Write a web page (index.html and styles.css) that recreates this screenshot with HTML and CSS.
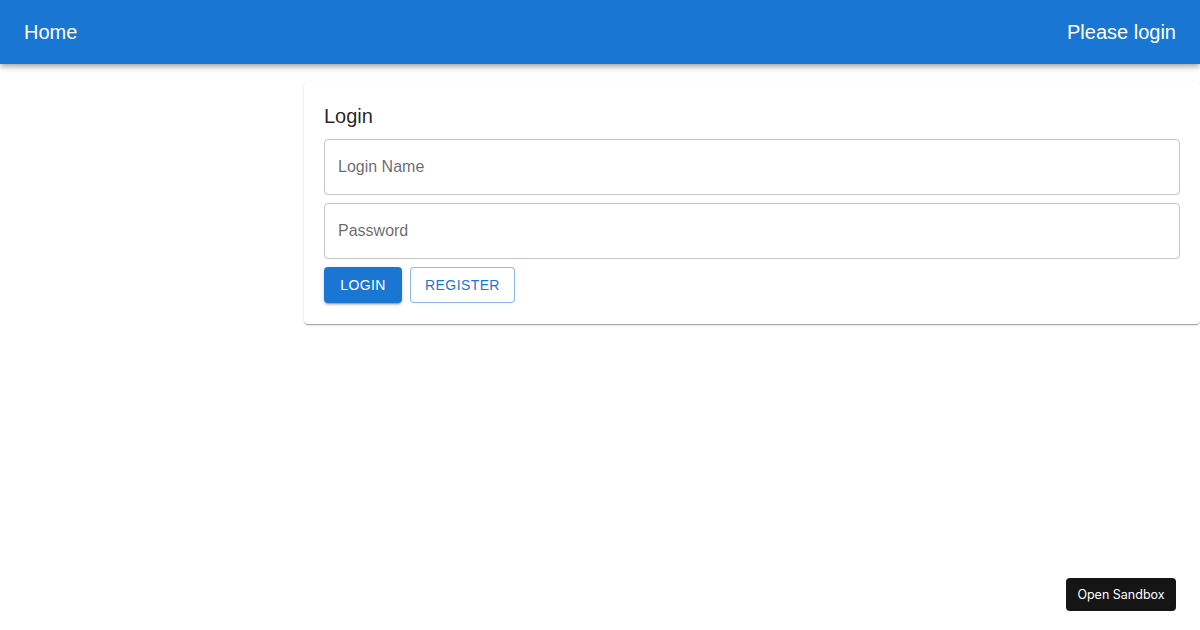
FILE: index.html
```html
<!DOCTYPE html>
<html lang="en">
<head>
<meta charset="utf-8">
<title>Login</title>
<link rel="stylesheet" href="styles.css">
</head>
<body>
<header class="appbar">
  <span class="appbar-title">Home</span>
  <span class="appbar-right">Please login</span>
</header>
<main class="layout">
  <aside class="side"></aside>
  <section class="card">
    <h2 class="card-title">Login</h2>
    <div class="field"><span class="field-label">Login Name</span></div>
    <div class="field"><span class="field-label">Password</span></div>
    <div class="actions">
      <button class="btn btn-contained">LOGIN</button>
      <button class="btn btn-outlined">REGISTER</button>
    </div>
  </section>
</main>
<button class="sandbox">Open Sandbox</button>
</body>
</html>
```
FILE: styles.css
```css
* { box-sizing: border-box; }
html, body { margin: 0; padding: 0; }
body {
  font-family: "Liberation Sans", Arial, Helvetica, sans-serif;
  background: #fff;
  color: rgba(0,0,0,0.87);
  width: 1200px;
  height: 630px;
  overflow: hidden;
  position: relative;
}
.appbar {
  height: 64px;
  background: #1976d2;
  color: #fff;
  display: flex;
  align-items: center;
  justify-content: space-between;
  padding: 0 24px;
  box-shadow: 0 2px 4px -1px rgba(0,0,0,0.2), 0 4px 5px 0 rgba(0,0,0,0.14), 0 1px 10px 0 rgba(0,0,0,0.12);
  position: relative;
  z-index: 2;
}
.appbar-title, .appbar-right {
  font-size: 20px;
  line-height: 1;
  font-weight: 400;
}
.layout {
  display: grid;
  grid-template-columns: 304px 1fr;
  padding-top: 18px;
}
.card {
  background: #fff;
  border-radius: 4px;
  box-shadow: 0 2px 1px -1px rgba(0,0,0,0.2), 0 1px 1px 0 rgba(0,0,0,0.14), 0 1px 3px 0 rgba(0,0,0,0.12);
  padding: 20px 20px 21px;
  display: flex;
  flex-direction: column;
}
.card-title {
  margin: 0 0 9px;
  font-size: 20px;
  font-weight: 400;
  line-height: 28px;
  color: rgba(0,0,0,0.87);
}
.field {
  height: 56px;
  border: 1px solid rgba(0,0,0,0.23);
  border-radius: 4px;
  display: flex;
  align-items: center;
  padding: 0 13px;
  margin-bottom: 8px;
}
.field-label {
  font-size: 16px;
  color: rgba(0,0,0,0.6);
}
.actions {
  display: flex;
  gap: 8px;
}
.btn {
  height: 36px;
  font-family: "Liberation Sans", Arial, Helvetica, sans-serif;
  font-size: 14px;
  font-weight: 400;
  letter-spacing: 0.4px;
  border-radius: 4px;
  cursor: pointer;
  padding: 0;
}
.btn-contained {
  background: #1976d2;
  color: #fff;
  border: none;
  width: 78px;
  box-shadow: 0 3px 1px -2px rgba(0,0,0,0.2), 0 2px 2px 0 rgba(0,0,0,0.14), 0 1px 5px 0 rgba(0,0,0,0.12);
}
.btn-outlined {
  background: #fff;
  color: #1976d2;
  border: 1px solid rgba(25,118,210,0.5);
  width: 105px;
}
.sandbox {
  position: absolute;
  right: 24px;
  bottom: 19px;
  width: 110px;
  height: 33px;
  background: #151515;
  color: #fff;
  border: none;
  border-radius: 4px;
  font-family: Inter, "Liberation Sans", Arial, sans-serif;
  font-size: 12.5px;
  padding: 0;
}
```
